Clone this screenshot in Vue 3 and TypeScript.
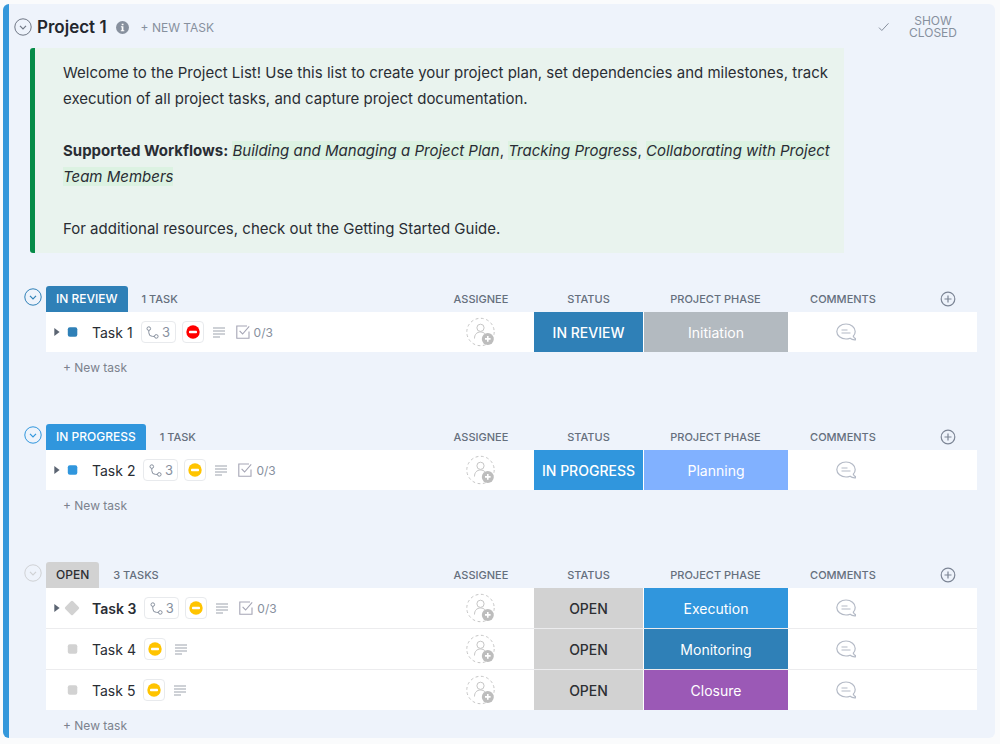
<script setup lang="ts">
import { reactive, ref } from 'vue'

interface Task {
  name: string
  marker: 'square' | 'diamond'
  milestone?: boolean
  subtasks?: number
  priority: string
  checklist?: string
  phase: string
  phaseColor: string
}

interface Group {
  status: string
  count: string
  color: string
  text: string
  accent: string
  open: boolean
  tasks: Task[]
}

const showClosed = ref(true)

const groups = reactive<Group[]>([
  {
    status: 'IN REVIEW', count: '1 TASK', color: '#2f80b7', text: '#ffffff', accent: '#2f80b7', open: true,
    tasks: [
      { name: 'Task 1', marker: 'square', subtasks: 3, priority: '#ff0000', checklist: '0/3', phase: 'Initiation', phaseColor: '#b3bac0' },
    ],
  },
  {
    status: 'IN PROGRESS', count: '1 TASK', color: '#3096dd', text: '#ffffff', accent: '#3096dd', open: true,
    tasks: [
      { name: 'Task 2', marker: 'square', subtasks: 3, priority: '#ffc400', checklist: '0/3', phase: 'Planning', phaseColor: '#81b1ff' },
    ],
  },
  {
    status: 'OPEN', count: '3 TASKS', color: '#d2d2d2', text: '#2d2f33', accent: '#cfd1d4', open: true,
    tasks: [
      { name: 'Task 3', marker: 'diamond', milestone: true, subtasks: 3, priority: '#ffc400', checklist: '0/3', phase: 'Execution', phaseColor: '#3096dd' },
      { name: 'Task 4', marker: 'square', priority: '#ffc400', phase: 'Monitoring', phaseColor: '#2f80b7' },
      { name: 'Task 5', marker: 'square', priority: '#ffc400', phase: 'Closure', phaseColor: '#9b59b6' },
    ],
  },
])
</script>

<template>
  <main class="panel">
    <header class="head">
      <button class="toggle" type="button" aria-label="Collapse project">
        <svg width="18" height="18" viewBox="0 0 18 18" fill="none" stroke="currentColor">
          <circle cx="9" cy="9" r="8.2" />
          <path d="M6 7.800l3 3 3-3" stroke-width="1.200" />
        </svg>
      </button>
      <h1>Project 1</h1>
      <button class="info" type="button" aria-label="Project info">
        <svg width="13" height="13" viewBox="0 0 13 13">
          <circle cx="6.500" cy="6.500" r="6.500" fill="currentColor" />
          <path d="M4.900 5.300h2.500v4h.9v1H4.800v-1h.9v-3h-.8zM5.700 2.700h1.800v1.600H5.700z" fill="#fff" />
        </svg>
      </button>
      <button class="new-top" type="button">+ NEW TASK</button>
      <label class="closed">
        <input v-model="showClosed" type="checkbox" />
        <svg width="12" height="10" viewBox="0 0 12 10" fill="none" stroke="currentColor">
          <path d="M1 5.600l2.800 2.900L10.500 1.300" />
        </svg>
        <span>SHOW CLOSED</span>
      </label>
    </header>

    <section class="note">
      <p>Welcome to the Project List! Use this list to create your project plan, set dependencies and milestones, track execution of all project tasks, and capture project documentation.</p>
      <p><strong>Supported Workflows:</strong> <em>Building and Managing a Project Plan</em>, <em>Tracking Progress</em>, <em>Collaborating with Project Team Members</em></p>
      <p>For additional resources, check out the Getting Started Guide.</p>
    </section>

    <section v-for="group in groups" :key="group.status" class="group">
      <button
        class="toggle group-toggle"
        type="button"
        :aria-label="'Collapse ' + group.status"
        :style="{ color: group.accent }"
        @click="group.open = !group.open"
      >
        <svg width="18" height="18" viewBox="0 0 18 18" fill="none" stroke="currentColor">
          <circle cx="9" cy="9" r="8.2" />
          <path d="M6 7.800l3 3 3-3" stroke-width="1.200" />
        </svg>
      </button>
      <div class="body">
        <table>
          <colgroup>
            <col />
            <col class="c-assignee" />
            <col class="c-status" />
            <col class="c-phase" />
            <col class="c-comments" />
            <col class="c-add" />
          </colgroup>
          <thead>
            <tr>
              <th class="lead" scope="col">
                <div class="lead-row">
                  <span class="tag" :style="{ background: group.color, color: group.text }">{{ group.status }}</span>
                  <span>{{ group.count }}</span>
                </div>
              </th>
              <th scope="col">ASSIGNEE</th>
              <th scope="col">STATUS</th>
              <th scope="col">PROJECT PHASE</th>
              <th scope="col">COMMENTS</th>
              <th class="add" scope="col">
                <button type="button" aria-label="Add column">
                  <svg width="16" height="16" viewBox="0 0 16 16" fill="none" stroke="currentColor" stroke-width="1.200">
                    <circle cx="8" cy="8" r="6.800" />
                    <path d="M8 4.500v7M4.500 8h7" />
                  </svg>
                </button>
              </th>
            </tr>
          </thead>
          <tbody v-if="group.open">
            <tr v-for="task in group.tasks" :key="task.name">
              <td>
                <div class="task">
                  <span class="caret">
                    <svg v-if="task.subtasks" width="6" height="8" viewBox="0 0 6 8"><path d="M.3 0L5.600 4 .3 8z" fill="#5b6472" /></svg>
                  </span>
                  <span class="mark">
                    <svg v-if="task.marker === 'diamond'" width="16" height="16" viewBox="0 0 16 16"><rect x="2.500" y="2.500" width="11" height="11" rx="1.500" transform="rotate(45 8 8)" :fill="group.color" /></svg>
                    <svg v-else width="16" height="16" viewBox="0 0 16 16"><rect x="3.800" y="3.300" width="9.500" height="9.500" rx="2" :fill="group.color" /></svg>
                  </span>
                  <a class="name" :class="{ strong: task.milestone }" href="#">{{ task.name }}</a>
                  <button v-if="task.subtasks" class="chip subs" type="button">
                    <svg width="13" height="13" viewBox="0 0 13 13" fill="none" stroke="currentColor">
                      <circle cx="2.800" cy="2.600" r="1.800" />
                      <circle cx="10.300" cy="10.400" r="1.800" />
                      <path d="M2.800 4.400v2.300q0 3.700 3.700 3.700h2" />
                    </svg>
                    <span>{{ task.subtasks }}</span>
                  </button>
                  <button class="chip prio" type="button" aria-label="Priority">
                    <svg width="14" height="14" viewBox="0 0 14 14">
                      <circle cx="7" cy="7" r="6.700" :fill="task.priority" />
                      <rect x="3" y="5.700" width="8" height="2.600" rx=".8" fill="#fff" />
                    </svg>
                  </button>
                  <svg class="lines" width="12" height="11" viewBox="0 0 12 11" stroke="currentColor" stroke-width="1.100">
                    <path d="M0 1h12M0 4h12M0 7h12M0 10h7" />
                  </svg>
                  <span v-if="task.checklist" class="check">
                    <svg width="14" height="14" viewBox="0 0 14 14" fill="none" stroke="currentColor" stroke-width="1.100">
                      <path d="M11 1H.8v12.200H13V6.500" />
                      <path d="M3.600 5.800l3 3.200L13.200 1.300" />
                    </svg>
                    <span>{{ task.checklist }}</span>
                  </span>
                </div>
              </td>
              <td class="center">
                <button class="person" type="button" aria-label="Assign">
                  <svg width="30" height="30" viewBox="0 0 30 30" fill="none" stroke="#c6c6c6">
                    <circle cx="14.500" cy="15" r="13.700" stroke-dasharray="2.800 2.580" />
                    <circle cx="14.500" cy="10.800" r="3.600" />
                    <path d="M8.500 21.500c0-4 2.300-6.500 6-6.500 2 0 3.400.6 4.400 1.800" />
                    <circle cx="21.800" cy="21.900" r="6" fill="#bdbdbd" stroke="none" />
                    <path d="M21.800 19.100v5.600M19 21.900h5.600" stroke="#fff" stroke-width="1.600" />
                  </svg>
                </button>
              </td>
              <td>
                <button class="fill status" type="button" :style="{ background: group.color, color: group.text }">{{ group.status }}</button>
              </td>
              <td class="phase-cell">
                <button class="fill phase" type="button" :style="{ background: task.phaseColor }">{{ task.phase }}</button>
              </td>
              <td class="center comment">
                <button type="button" aria-label="Comments">
                  <svg width="20" height="18" viewBox="0 0 20 18" fill="none" stroke="#b4bac6" stroke-width="1.200">
                    <path d="M17.300 13.200c1.200-1.300 1.900-2.900 1.900-4.700C19.200 4.400 15.100 1 10 1S.8 4.400.8 8.500 4.900 16 10 16c1.500 0 2.900-.3 4.100-.8 1.500 1.300 3.200 1.800 5.300 1.600v-1.200c-1-.5-1.700-1.300-2.100-2.400z" />
                    <path d="M5.500 7h6M5.500 10h9" />
                  </svg>
                </button>
              </td>
              <td></td>
            </tr>
          </tbody>
        </table>
        <button class="new-task" type="button">+ New task</button>
      </div>
    </section>
  </main>
</template>

<style>
body {
  margin: 0;
  background: #fafbfc;
}
</style>

<style scoped>
.panel {
  margin: 4px 5px 5px 3px;
  border-left: 6px solid #3498db;
  border-radius: 6px;
  background: #eef3fb;
  color: #292d34;
  font-family: Inter, "Liberation Sans", sans-serif;
  font-size: 15px;
}

button {
  margin: 0;
  padding: 0;
  border: 0;
  background: none;
  color: inherit;
  font: inherit;
  cursor: pointer;
}

svg {
  display: block;
  flex: none;
}

.head {
  box-sizing: border-box;
  display: flex;
  align-items: center;
  height: 44px;
  padding: 2px 36px 0 5px;
  color: #87909e;
}

.toggle {
  flex: none;
  width: 18px;
  height: 18px;
}

.head .toggle {
  color: #6f7785;
}

h1 {
  margin: 0 9px 0 5px;
  color: #23262d;
  font-size: 17px;
  font-weight: 600;
  line-height: 24px;
}

.new-top {
  margin-left: 12px;
  font-size: 12px;
}

.closed {
  position: relative;
  display: flex;
  align-items: center;
  gap: 17px;
  margin-left: auto;
  font-size: 12px;
  line-height: 12px;
  text-align: center;
}

.closed input {
  position: absolute;
  inset: 0;
  margin: 0;
  opacity: 0;
}

.closed span {
  width: 52px;
}

.note {
  box-sizing: border-box;
  max-width: 814px;
  margin-left: 21px;
  padding: 12px 8px 11px 28px;
  border-left: 5px solid #068b48;
  border-radius: 3px 0 0 3px;
  background: #e9f3ee;
  line-height: 26px;
}

.note p {
  margin: 0 0 26px;
}

.note p:last-child {
  margin: 0;
}

.note strong {
  font-weight: 700;
}

.note em {
  background: #dcf2e2;
}

.group {
  display: flex;
  align-items: flex-start;
  margin: 0 18px 0 15px;
  padding-bottom: 44px;
}

.note + .group {
  margin-top: 33px;
}

.group:last-child {
  padding-bottom: 0;
}

.group-toggle {
  margin: 2px 4px 0 0;
}

.body {
  flex: 1;
  min-width: 0;
}

table {
  width: 100%;
  border-collapse: collapse;
  table-layout: fixed;
}

.c-assignee {
  width: 106px;
}

.c-status {
  width: 109px;
}

.c-phase {
  width: 145px;
}

.c-comments {
  width: 110px;
}

.c-add {
  width: 79px;
}

th,
td {
  padding: 0;
}

th {
  height: 26px;
  color: #656f7d;
  font-size: 11px;
  font-weight: 500;
}

.lead-row {
  display: flex;
  align-items: center;
  gap: 14px;
}

.tag {
  padding: 0 10px;
  border-radius: 3px 3px 0 0;
  font-size: 12px;
  line-height: 26px;
}

.add button {
  display: block;
  margin-left: 42px;
  color: #7c8595;
}

td {
  height: 40px;
  background: #fff;
}

tbody tr + tr td {
  border-top: 1px solid #ececee;
}

.task {
  display: flex;
  align-items: center;
  height: 40px;
  padding-left: 8px;
  color: #87909e;
}

.caret {
  width: 10px;
}

.mark {
  width: 28px;
}

.name {
  margin-right: 8px;
  color: #292d34;
  font-size: 14px;
  text-decoration: none;
}

.strong {
  font-weight: 600;
}

.chip {
  display: flex;
  align-items: center;
  justify-content: center;
  box-sizing: border-box;
  height: 22px;
  margin-right: 6px;
  border: 1px solid #e8eaed;
  border-radius: 4px;
  font-size: 13px;
}

.subs {
  gap: 3px;
  width: 35px;
}

.prio {
  width: 22px;
}

.lines {
  margin: 0 11px 0 3px;
  color: #9ea4ae;
}

.check {
  display: flex;
  align-items: center;
  gap: 4px;
  font-size: 12px;
}

.check svg {
  color: #a5a5b5;
}

.center button {
  display: block;
  margin: 0 auto;
}

.comment {
  padding-left: 6px;
}

.fill {
  display: block;
  width: 100%;
  height: 40px;
}

.status {
  font-size: 14px;
  font-weight: 500;
}

.phase-cell {
  padding-left: 1px;
}

.phase {
  color: #fff;
  font-size: 14px;
}

.new-task {
  display: block;
  margin: 4px 0 0 17px;
  color: #7c828d;
  font-size: 12px;
  line-height: 24px;
}
</style>
